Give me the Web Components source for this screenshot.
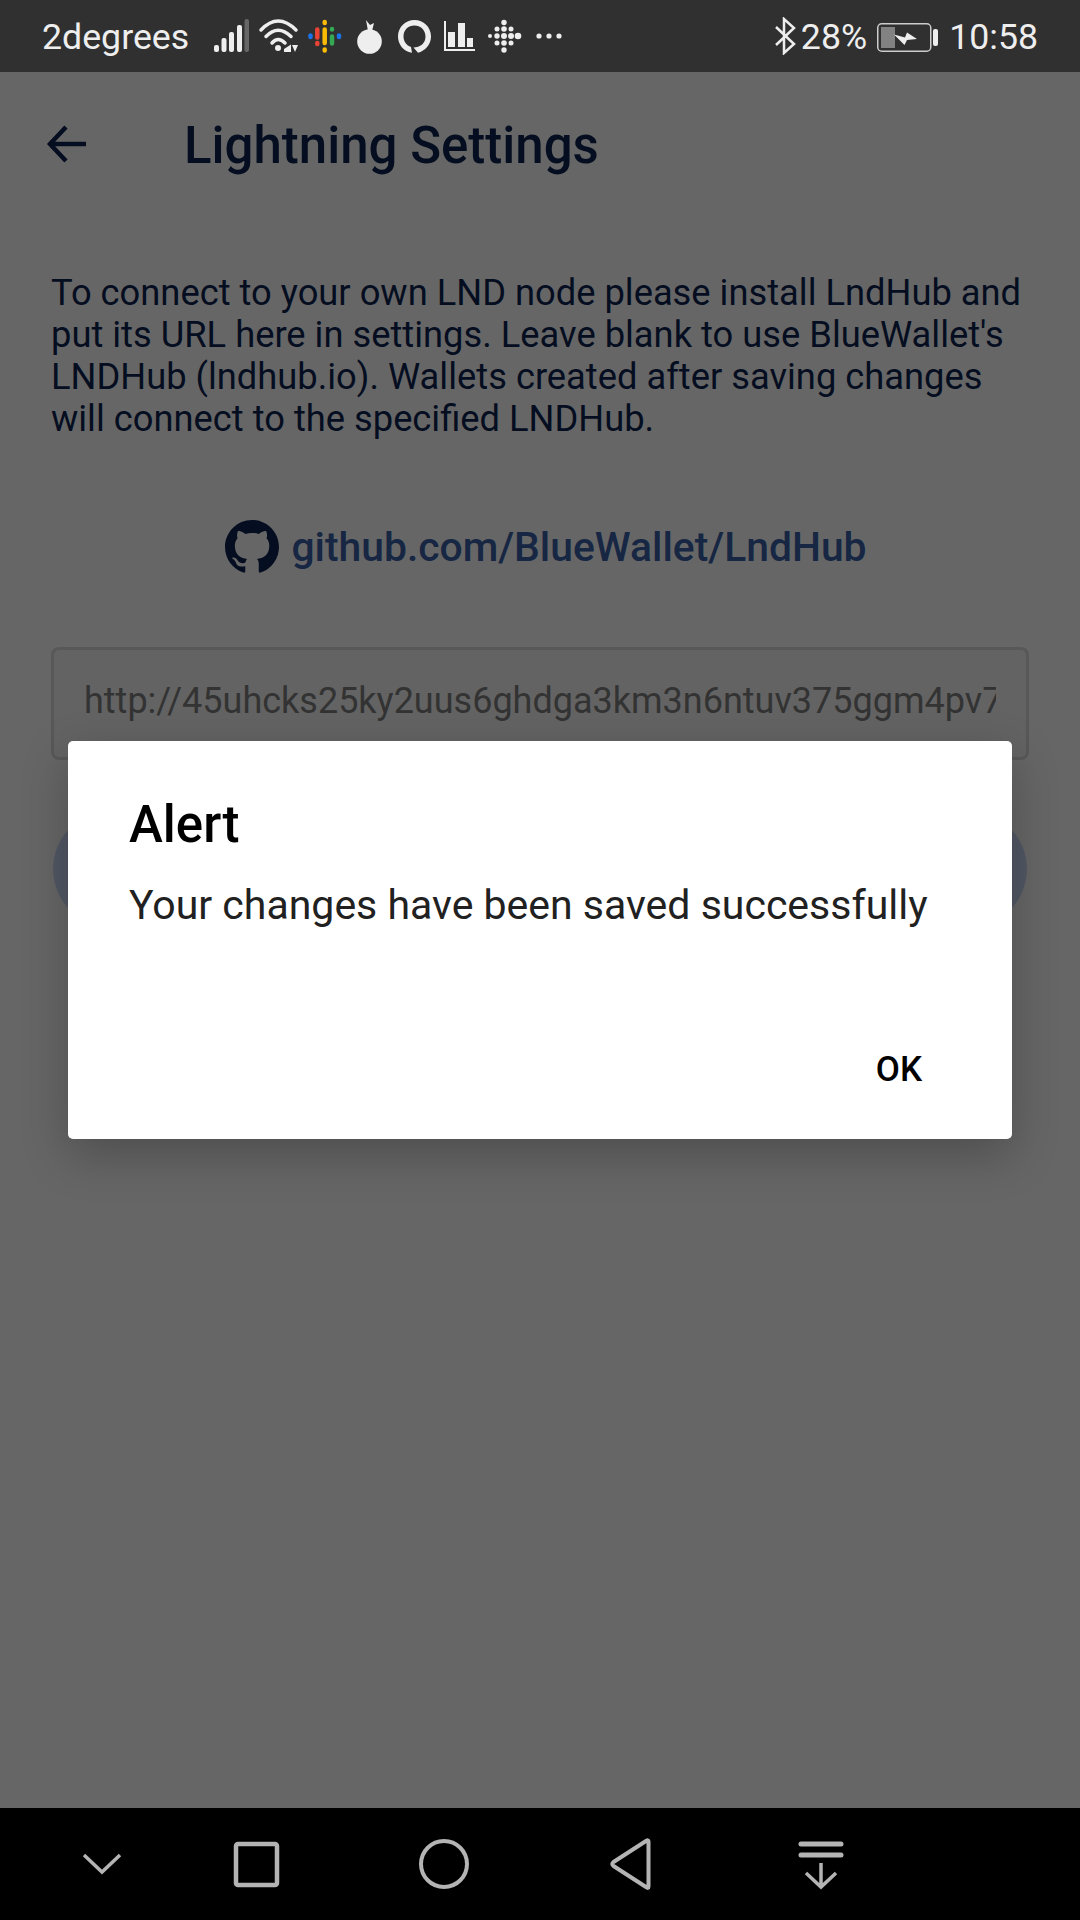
<!DOCTYPE html>
<html>
<head>
<meta charset="utf-8">
<title>Lightning Settings</title>
<style>
  html, body { margin: 0; padding: 0; }
  body { width: 1080px; height: 1920px; overflow: hidden; font-family: Roboto, sans-serif; }
</style>
</head>
<body>
<phone-screen>
  <status-bar slot="status"></status-bar>
  <settings-page></settings-page>
  <alert-dialog slot="overlay" heading="Alert" action="OK">Your changes have been saved successfully</alert-dialog>
  <nav-bar slot="nav"></nav-bar>
</phone-screen>

<script>
// the whole phone: status bar, content with scrim + dialog, nav bar
class PhoneScreen extends HTMLElement {
  constructor() {
    super();
    this.attachShadow({mode: "open"}).innerHTML = `
<style>
  :host { display: flex; flex-direction: column; width: 1080px; height: 1920px; background: #000; }
  #content { position: relative; flex: 1; background: #fff; overflow: hidden; }
  #scrim { position: absolute; inset: 0; background: rgba(0,0,0,.6); }
  #over { position: absolute; left: 68px; right: 68px; top: 669px; }
</style>
<slot name="status"></slot>
<div id="content">
  <slot></slot>
  <div id="scrim"></div>
  <div id="over"><slot name="overlay"></slot></div>
</div>
<slot name="nav"></slot>`;
  }
}

class StatusBar extends HTMLElement {
  constructor() {
    super();
    this.attachShadow({mode: "open"}).innerHTML = `
<style>
  :host { display: flex; align-items: center; height: 72px; background: #303030; color: #eee;
          padding: 2px 42px 0 42px; font: 400 35.700px Roboto, sans-serif; box-sizing: border-box; }
  svg { display: block; flex: none; }
  .name { width: 148px; white-space: nowrap; }
  .r { display: flex; align-items: center; margin-left: auto; }
  .ic { margin-top: -2px; }
</style>
<span class="name">2degrees</span>
<svg class="ic" width="375" height="72" viewBox="190 0 375 72">
  <!-- signal -->
  <g fill="#eee">
    <rect x="214" y="45" width="5" height="7" rx="2"/>
    <rect x="221.500" y="38" width="5" height="14" rx="2"/>
    <rect x="229" y="32" width="5" height="20" rx="2"/>
    <rect x="237" y="25" width="5" height="27" rx="2"/>
  </g>
  <rect x="244.500" y="19" width="4.500" height="33" rx="2" fill="#666"/>
  <!-- wifi -->
  <g fill="none" stroke="#eee" stroke-width="3.500" stroke-linecap="round">
    <path d="M261 30Q278 12 296 30"/>
    <path d="M266 36.500Q278 24 291 36.500"/>
    <path d="M272 43Q278 36 285 43"/>
  </g>
  <circle cx="278" cy="48" r="3" fill="#eee"/>
  <path d="M284 49L291 44.500V52H284ZM292 45H298L295 52Z" fill="#eee"/>
  <!-- podcasts -->
  <g stroke-width="4.500" stroke-linecap="round" fill="none">
    <path d="M310.500 35.500v1.500" stroke="#1a73e8"/>
    <path d="M317.300 29.500v8" stroke="#ea4335"/>
    <path d="M317.300 43v1" stroke="#ea4335"/>
    <path d="M324.700 22v1M324.700 29.500v13.500M324.700 49.500v1" stroke="#fbbc04"/>
    <path d="M332 29v.5M332 36.500v7" stroke="#34a853"/>
    <path d="M339 35.500v1.500" stroke="#1a73e8"/>
  </g>
  <!-- round fruit icon -->
  <circle cx="369.500" cy="41.500" r="12.300" fill="#eee"/>
  <path d="M368 31L366 20L370 25L374 23L372 31Z" fill="#eee"/>
  <!-- ring -->
  <path d="M412 52.800C403 51.500 398 44 398 36.500C398 27 405.500 20 414.500 20C423.500 20 431 27 431 36.500C431 44.500 425 51 418 52.800L413.500 47.500C420 47.500 425.500 43.500 425.500 36.500C425.500 30 420.500 25.500 414.500 25.500C408 25.500 403.500 30 403.500 36.500C403.500 41.500 406.500 45.500 411 47Z" fill="#eee"/>
  <!-- bars -->
  <path d="M445 21V50H475" fill="none" stroke="#eee" stroke-width="2"/>
  <g fill="#eee">
    <rect x="448" y="32" width="7" height="15"/>
    <rect x="458" y="23" width="7" height="24"/>
    <rect x="467" y="38" width="6" height="9"/>
  </g>
  <!-- fitbit dots -->
  <g fill="#eee">
    <circle cx="504" cy="22.500" r="2.700"/>
    <circle cx="497" cy="29" r="2.500"/><circle cx="504" cy="29" r="2.800"/><circle cx="511" cy="29" r="2.500"/>
    <circle cx="490" cy="36" r="2"/><circle cx="497" cy="36" r="2.700"/><circle cx="504" cy="36" r="3"/><circle cx="511" cy="36" r="3"/><circle cx="518" cy="36" r="3.300"/>
    <circle cx="497" cy="43" r="2.500"/><circle cx="504" cy="43" r="2.800"/><circle cx="511" cy="43" r="2.500"/>
    <circle cx="504" cy="50" r="2.700"/>
  </g>
  <g fill="#eee"><circle cx="539" cy="36" r="2.600"/><circle cx="549" cy="36" r="2.600"/><circle cx="559" cy="36" r="2.600"/></g>
</svg>
<div class="r">
  <svg class="ic" width="24" height="38" viewBox="774 17 24 38" style="margin-right:4px">
    <path d="M777 27L795 44L785 53V19L795 28L777 45" fill="none" stroke="#eee" stroke-width="2.500"/>
  </svg>
  <span>28%</span>
  <svg class="ic" width="62" height="32" viewBox="878 20 62 32" style="margin:0 10px 0 10px">
    <rect x="878.750" y="22.750" width="53" height="27.500" rx="4" fill="none" stroke="#ccc" stroke-width="1.500"/>
    <rect x="882" y="26" width="14" height="21" fill="#828282"/>
    <path d="M895 33.500L906 36.500L908 31.500L918 38L908 39L905.500 44Z" fill="#eee"/>
    <rect x="934" y="28" width="5" height="17" rx="2" fill="#eee"/>
  </svg>
  <span>10:58</span>
</div>`;
  }
}

class SettingsPage extends HTMLElement {
  constructor() {
    super();
    this.attachShadow({mode: "open"}).innerHTML = `
<style>
  :host { display: block; color: #0c2550; font-family: Roboto, sans-serif; }
  header { display: flex; align-items: center; height: 144px; padding-left: 46px; }
  header svg { flex: none; margin-right: 96px; }
  h1 { margin: 0; font: 500 51px Roboto, sans-serif; position: relative; top: 1px; }
  p { margin: 56px 51px 0; font-size: 36.300px; line-height: 42px; }
  .link { display: flex; align-items: center; justify-content: center; gap: 12px; margin-top: 77px; padding-left: 12px;
          height: 60px; font-size: 40.800px; font-weight: 500; }
  .link span { color: #395fa8; }
  .field { margin: 70px 51px 0; height: 113px; box-sizing: border-box; border: 3px solid #dcdcdc; border-radius: 8px;
           background: #f8f8f8; display: flex; align-items: center; padding: 0 30px 6px; }
  .field div { width: 100%; overflow: hidden; white-space: nowrap; font-size: 36px; color: #808080; }
  .btn { margin: 51px 53px 0; height: 116px; border-radius: 58px; background: #ccddf9; }
</style>
<header>
  <svg width="42" height="40" viewBox="0 0 42 40">
    <path d="M40 20H4M20 3L4 20L20 37" fill="none" stroke="#0c2550" stroke-width="4.500"/>
  </svg>
  <h1>Lightning Settings</h1>
</header>
<p>To connect to your own LND node please install LndHub and put its URL here in settings. Leave blank to use BlueWallet's LNDHub (lndhub.io). Wallets created after saving changes will connect to the specified LNDHub.</p>
<div class="link">
  <svg width="54" height="54" viewBox="0 0 16 16"><path fill="#0c2550" d="M8 0C3.580 0 0 3.580 0 8c0 3.540 2.290 6.530 5.470 7.590.4.070.55-.17.55-.38 0-.19-.01-.82-.01-1.490-2.010.37-2.530-.49-2.690-.94-.09-.23-.48-.94-.82-1.130-.28-.15-.68-.52-.01-.53.63-.01 1.080.58 1.230.82.720 1.210 1.870.870 2.330.660.070-.520.280-.870.510-1.070-1.780-.2-3.640-.89-3.640-3.950 0-.870.310-1.590.820-2.150-.08-.2-.36-1.020.080-2.120 0 0 .67-.21 2.200.820.640-.18 1.320-.27 2-.27.680 0 1.360.09 2 .27 1.530-1.040 2.200-.82 2.200-.82.440 1.100.160 1.920.080 2.120.510.560.820 1.270.820 2.150 0 3.070-1.870 3.750-3.650 3.950.290.250.540.730.540 1.480 0 1.070-.01 1.930-.01 2.200 0 .210.150.460.550.380A8.010 8.010 0 0 0 16 8c0-4.420-3.580-8-8-8z"/></svg>
  <span>github.com/BlueWallet/LndHub</span>
</div>
<div class="field"><div>http://45uhcks25ky2uus6ghdga3km3n6ntuv375ggm4pv7</div></div>
<div class="btn"></div>`;
  }
}

class AlertDialog extends HTMLElement {
  constructor() {
    super();
    this.attachShadow({mode: "open"}).innerHTML = `
<style>
  :host { display: flex; flex-direction: column; height: 398px; box-sizing: border-box; background: #fff; border-radius: 5px;
          box-shadow: 0 16px 48px rgba(0,0,0,.24); padding: 54px 90px 0 61px; font-family: Roboto, sans-serif; }
  h2 { margin: 0; font: 500 51px/60px Roboto, sans-serif; color: #000; }
  .msg { margin-top: 25px; font-size: 41px; line-height: 50px; color: #212121; white-space: nowrap; }
  .act { margin-top: auto; margin-bottom: 49px; align-self: flex-end; font: 500 35px/40px Roboto, sans-serif; color: #000; }
</style>
<h2 id="h"></h2>
<div class="msg"><slot></slot></div>
<div class="act" id="a"></div>`;
  }
  connectedCallback() {
    this.shadowRoot.querySelector("#h").textContent = this.getAttribute("heading");
    this.shadowRoot.querySelector("#a").textContent = this.getAttribute("action");
  }
}

class NavBar extends HTMLElement {
  constructor() {
    super();
    this.attachShadow({mode: "open"}).innerHTML = `
<style>
  :host { display: block; height: 112px; background: #000; }
  svg { display: block; }
</style>
<svg width="1080" height="112" viewBox="0 0 1080 112" fill="none" stroke="#b4b4b4" stroke-width="4">
  <path d="M84 47L102 64L120 47" stroke-width="3.500"/>
  <rect x="236" y="36" width="41" height="41" rx="2" stroke-width="4.500"/>
  <circle cx="444" cy="56" r="23" stroke-width="4"/>
  <path d="M648.500 33.500V78.500Q648.500 81 646 79L613.500 58Q611 56 613.500 54L646 33Q648.500 31.500 648.500 33.500Z" stroke-linejoin="round"/>
  <path d="M801 36H841M801 47H841" stroke-width="5" stroke-linecap="round"/>
  <path d="M821 55V78M806 65L821 79L836 65" stroke-width="3.500"/>
</svg>`;
  }
}

customElements.define("phone-screen", PhoneScreen);
customElements.define("status-bar", StatusBar);
customElements.define("settings-page", SettingsPage);
customElements.define("alert-dialog", AlertDialog);
customElements.define("nav-bar", NavBar);
</script>
</body>
</html>
